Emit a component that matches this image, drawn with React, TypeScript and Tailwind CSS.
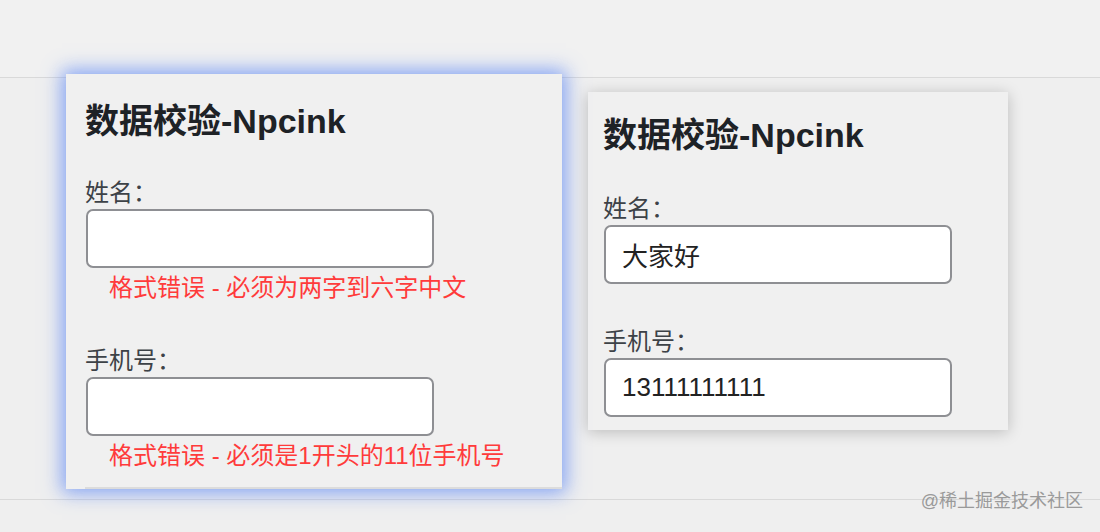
const font = "font-['Liberation_Sans','Noto_Sans_CJK_SC',sans-serif]";

function Field({ label, value, error, first }: { label: string; value?: string; error?: string; first?: boolean }) {
  return (
    <div className={first ? 'mt-[36px]' : 'mt-[41px]'}>
      <div className="text-[24px] leading-[32px] text-[#3d4247]">{label}</div>
      <input
        readOnly
        value={value ?? ''}
        className="ml-px block h-[59px] w-[348px] rounded-[7px] border-2 border-[#8e8f93] bg-white px-[16px] text-[26px] text-[#222] outline-none"
      />
      {error && <div className="mt-[4px] pl-[24px] text-[24px] leading-[32px] text-[#ff3b3b]">{error}</div>}
    </div>
  );
}

export default function App() {
  return (
    <div className={`relative h-[532px] w-[1100px] overflow-hidden bg-[#efefef] ${font}`}>
      <div className="h-[78px] border-b border-[#d9d9d9] bg-[#f1f1f1]" />

      <div className="-mt-[4px] flex items-start gap-[26px] pl-[66px]">
        {/* focused card */}
        <div className="relative z-10 w-[496px] bg-[#f0f0f0] pl-[19px] pt-[27px] shadow-[0_0_18px_4px_rgba(85,130,245,0.7)]">
          <h2 className="text-[34px] font-bold leading-[40px] text-[#1e2226]">数据校验-Npcink</h2>
          <Field first label="姓名：" error="格式错误 - 必须为两字到六字中文" />
          <Field label="手机号：" error="格式错误 - 必须是1开头的11位手机号" />
          <div className="mt-[15px] h-[2px] bg-[#dcdcdc]" />
        </div>

        {/* valid card */}
        <div className="mt-[18px] w-[420px] bg-[#f0f0f0] pb-[13px] pl-[15px] pt-[23px] shadow-[0_2px_14px_rgba(0,0,0,0.22)]">
          <h2 className="text-[34px] font-bold leading-[40px] text-[#1e2226]">数据校验-Npcink</h2>
          <div className="mt-[38px]">
            <div className="text-[24px] leading-[32px] text-[#3d4247]">姓名：</div>
            <input
              readOnly
              value="大家好"
              className="ml-px block h-[59px] w-[348px] rounded-[7px] border-2 border-[#8e8f93] bg-white px-[16px] text-[26px] text-[#222] outline-none"
            />
          </div>
          <div className="mt-[42px]">
            <div className="text-[24px] leading-[32px] text-[#3d4247]">手机号：</div>
            <input
              readOnly
              value="13111111111"
              className="ml-px block h-[59px] w-[348px] rounded-[7px] border-2 border-[#8e8f93] bg-white px-[16px] text-[26px] text-[#222] outline-none"
            />
          </div>
        </div>
      </div>

      <div className="mt-[10px] border-t border-[#d9d9d9]" />
      <div className="absolute right-[17px] top-[489px] text-[18px] leading-[24px] text-[#9a9a9a]">@稀土掘金技术社区</div>
    </div>
  );
}
